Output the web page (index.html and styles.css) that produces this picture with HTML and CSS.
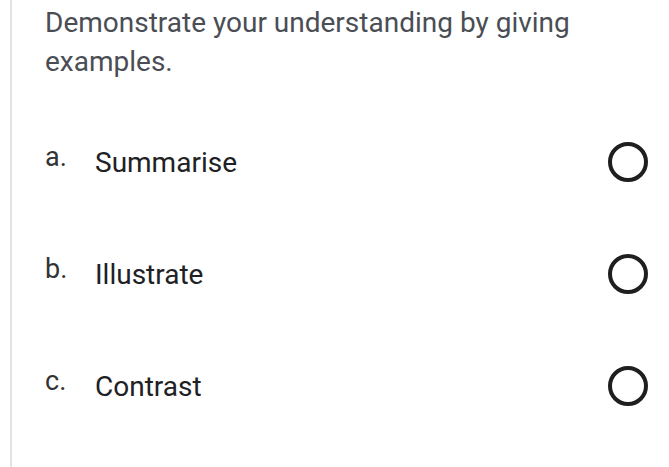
FILE: index.html
```html
<!DOCTYPE html>
<html>
<head>
<meta charset="utf-8">
<link rel="stylesheet" href="styles.css">
</head>
<body>
<div class="card">
  <p class="question">Demonstrate your understanding by giving examples.</p>
  <div class="options">
    <div class="option">
      <span class="label">a.</span>
      <span class="text">Summarise</span>
      <span class="radio"></span>
    </div>
    <div class="option">
      <span class="label">b.</span>
      <span class="text">Illustrate</span>
      <span class="radio"></span>
    </div>
    <div class="option">
      <span class="label">c.</span>
      <span class="text">Contrast</span>
      <span class="radio"></span>
    </div>
  </div>
</div>
</body>
</html>
```
FILE: styles.css
```css
html, body {
  margin: 0;
  padding: 0;
  background: #ffffff;
}
body {
  font-family: Roboto, "Liberation Sans", sans-serif;
  width: 669px;
  height: 467px;
  overflow: hidden;
}
.card {
  margin-left: 10px;
  border-left: 2px solid #e3e3e3;
  height: 467px;
  padding-left: 33px;
  padding-right: 21px;
  box-sizing: border-box;
}
.question {
  margin: 0;
  padding-top: 2.5px;
  font-size: 28px;
  line-height: 39px;
  color: #4a4e54;
  width: 560px;
}
.options {
  display: flex;
  flex-direction: column;
  padding-top: 61.5px;
  gap: 72px;
}
.option {
  display: flex;
  align-items: center;
  height: 40px;
}
.label {
  width: 50px;
  font-size: 27px;
  color: #333333;
  position: relative;
  top: -5px;
}
.text {
  flex: 1;
  font-size: 28px;
  color: #202124;
}
.radio {
  width: 32px;
  height: 32px;
  border: 4px solid #1f1f1f;
  border-radius: 50%;
}
```
